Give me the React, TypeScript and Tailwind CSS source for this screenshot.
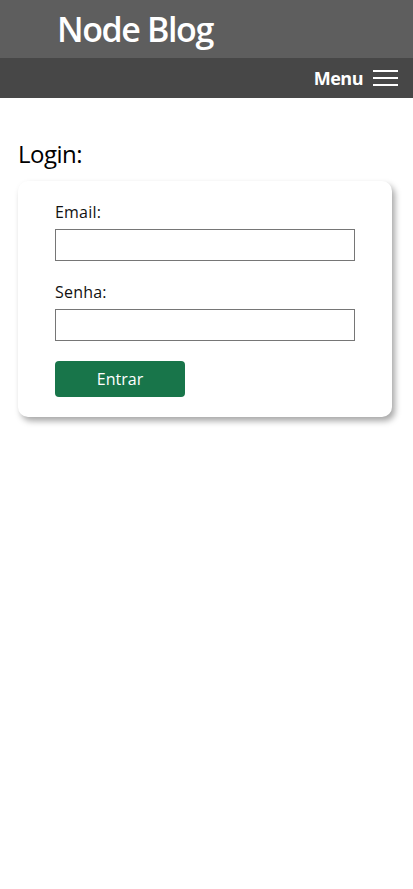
import React from 'react';

export default function App() {
  return (
    <div className="min-h-screen bg-white font-['Open_Sans',sans-serif] text-black">
      {/* Header */}
      <header>
        <div className="h-[58px] bg-[#5e5e5e] pl-[57px] flex items-center">
          <h1 className="text-[34px] leading-none font-semibold text-white tracking-[-1.4px]">Node Blog</h1>
        </div>
        <div className="h-[40px] bg-[#474747] flex items-center justify-end pr-[15px]">
          <span className="text-[18px] font-bold text-white tracking-[-0.5px]">Menu</span>
          <span className="ml-[10px] flex flex-col gap-[5px] w-[25px]">
            <span className="block h-[2px] bg-white" />
            <span className="block h-[2px] bg-white" />
            <span className="block h-[2px] bg-white" />
          </span>
        </div>
      </header>

      {/* Login */}
      <main className="px-[18px] pt-[40px]">
        <h2 className="text-[24px] leading-[32px] font-medium tracking-[-0.5px]">Login:</h2>
        <form
          className="mt-[11px] w-[374px] rounded-[10px] bg-white pl-[37px] pt-[19px] pb-[20px] shadow-[3px_4px_6px_rgba(0,0,0,0.35)]"
          onSubmit={(e) => e.preventDefault()}
        >
          <label className="block text-[16px] leading-[24px] text-[#111] tracking-[0.2px]">Email:</label>
          <input type="email" className="mt-[5px] block h-[32px] w-[300px] border border-[#767676] outline-none" />
          <label className="mt-[19px] block text-[16px] leading-[24px] text-[#111] tracking-[0.2px]">Senha:</label>
          <input type="password" className="mt-[5px] block h-[32px] w-[300px] border border-[#767676] outline-none" />
          <button
            type="submit"
            className="mt-[20px] h-[36px] w-[130px] rounded-[4px] bg-[#18754a] text-[16px] text-white"
          >
            Entrar
          </button>
        </form>
      </main>
    </div>
  );
}
